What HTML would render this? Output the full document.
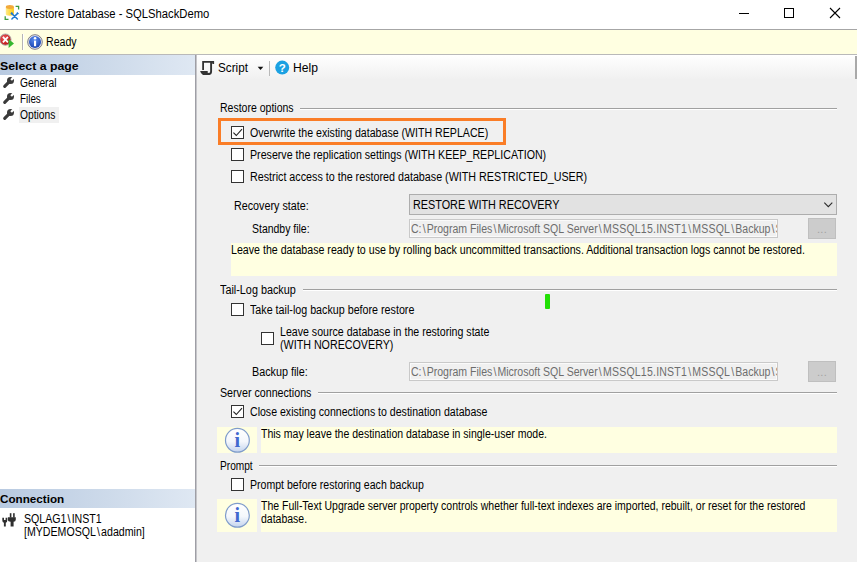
<!DOCTYPE html>
<html>
<head>
<meta charset="utf-8">
<title>Restore Database - SQLShackDemo</title>
<style>
html,body{margin:0;padding:0;}
body{width:857px;height:562px;overflow:hidden;position:relative;background:#fff;font-family:"Liberation Sans",sans-serif;font-size:12px;color:#000;}
.abs{position:absolute;}
svg{position:absolute;overflow:visible;}
.t{position:absolute;white-space:nowrap;line-height:13px;transform:scaleX(.884);transform-origin:0 50%;}
.s{font-size:12px;line-height:16px;transform:scaleX(.937);}
#titlebar{left:0;top:0;width:857px;height:29px;background:#fff;}
#status{left:0;top:29px;width:857px;height:24px;background:#ffffe1;border-top:1px solid #a6a6a6;border-bottom:1px solid #b9b9b9;}
#left{left:0;top:55px;width:195px;height:507px;background:#fff;}
#right{left:195px;top:55px;width:662px;height:507px;background:#f0f0f0;}
#rborder{left:195px;top:55px;width:2px;height:507px;background:linear-gradient(90deg,#9e9ea5 0,#9e9ea5 50%,#c6c6ca 50%,#c6c6ca 100%);}
#toolbar{left:196px;top:55px;width:661px;height:25px;background:linear-gradient(#ffffff,#f9f9f9 40%,#f0f0f0);}
.hdr{position:absolute;left:0;width:195px;background:linear-gradient(90deg,#b8cae1 0%,#cddaea 55%,#dfe8f3 100%);}
.hdr span{position:absolute;left:0px;top:4px;font-weight:bold;font-size:11.5px;line-height:15px;white-space:nowrap;transform-origin:0 50%;}
.cb{position:absolute;width:11px;height:11px;border:1px solid #333;background:#fff;}
.line{position:absolute;height:1px;background:#a0a0a0;box-shadow:0 1px 0 #fff;}
.note{position:absolute;background:#ffffe1;}
.tb{position:absolute;height:17px;border:1px solid #c9c9c9;background:#f0f0f0;color:#6d6d6d;overflow:hidden;white-space:nowrap;box-shadow:inset 0 0 0 1px #fafafa;}
.tb span{position:absolute;left:0.8px;top:2.5px;line-height:13px;transform:scaleX(.878);transform-origin:0 50%;}
.bs{margin:0 1.27px;font-style:normal;}
.uc{letter-spacing:.24px;font-style:normal;}
.btn{position:absolute;width:26px;height:19px;border:1px solid #bfbfbf;background:#cccccc;color:#a3a3a3;}
.btn span{position:absolute;left:8px;top:4px;font-size:11px;line-height:13px;letter-spacing:0.3px;}
</style>
</head>
<body>
<div id="titlebar" class="abs"></div>
<!-- title icon -->
<svg style="left:0;top:0" width="24" height="24" viewBox="0 0 24 24">
  <defs><linearGradient id="cy" x1="0" x2="1"><stop offset="0" stop-color="#ffe98a"/><stop offset=".45" stop-color="#ffdc4a"/><stop offset="1" stop-color="#fccb1a"/></linearGradient></defs>
  <path d="M5.8 7 V14 A4.05 1.7 0 0 0 13.9 14 V7 Z" fill="url(#cy)"/>
  <ellipse cx="9.85" cy="7" rx="4.05" ry="1.9" fill="#f2a93c"/>
  <path d="M15.6 6.4 H18.6 V9.5" fill="none" stroke="#3d9b3d" stroke-width="1.3"/>
  <path d="M5.2 16.3 V19.3 H8.5" fill="none" stroke="#3d9b3d" stroke-width="1.3"/>
  <path d="M11.6 13.4 L17.4 19 M17.6 13.4 L11.9 19" stroke="#1f78d1" stroke-width="1.5" stroke-linecap="round"/>
  <path d="M10.4 13.6 L11.9 12.1 L13 13.2 L11.5 14.7 Z" fill="#1f78d1"/>
  <path d="M16.6 12.6 Q17 14.2 18.8 14.3 L18.8 13.2 L17.7 13.2 L17.7 12.1 Z" fill="#1f78d1"/>
</svg>
<div id="title" class="t s" style="left:25.4px;top:6px;">Restore Database - SQLShackDemo</div>
<!-- window controls -->
<svg style="left:730px;top:0" width="127" height="29" viewBox="730 0 127 29">
  <path d="M739 13.5 H749" stroke="#000" stroke-width="1"/>
  <rect x="784.5" y="8.5" width="9" height="9" fill="none" stroke="#000" stroke-width="1"/>
  <path d="M830 8 L840 18 M840 8 L830 18" stroke="#000" stroke-width="1.1"/>
</svg>

<div id="status" class="abs"></div>
<svg style="left:0;top:30px" width="48" height="24" viewBox="0 30 48 24">
  <defs>
    <radialGradient id="rd" cx=".4" cy=".35" r=".7"><stop offset="0" stop-color="#f05a5a"/><stop offset="1" stop-color="#b80c0c"/></radialGradient>
    <radialGradient id="bl" cx=".45" cy=".3" r=".8"><stop offset="0" stop-color="#5b8ef0"/><stop offset="1" stop-color="#0f3aa8"/></radialGradient>
  </defs>
  <circle cx="5.4" cy="39.6" r="5.6" fill="url(#rd)" stroke="#a9a9a9" stroke-width="1"/>
  <path d="M2.9 36.9 L7.9 42.3 M7.9 36.9 L2.9 42.3" stroke="#fff" stroke-width="1.7"/>
  <path d="M8.6 39 L14 43.6 L8.6 48 Z" fill="#36b82f"/>
  <path d="M22.5 34 V50" stroke="#b5b5b5" stroke-width="1"/>
  <path d="M23.5 34 V50" stroke="#ffffff" stroke-width="1"/>
  <circle cx="35" cy="42" r="7.3" fill="#e8e8f0" stroke="#7d7d86" stroke-width="1"/>
  <circle cx="35" cy="42" r="6" fill="url(#bl)"/>
  <rect x="34" y="40.6" width="2.1" height="5.6" fill="#fff"/>
  <circle cx="35.05" cy="38.2" r="1.25" fill="#fff"/>
</svg>
<div id="ready" class="t" style="left:46px;top:36px;">Ready</div>

<div id="left" class="abs"></div>
<div id="right" class="abs"></div>
<div id="toolbar" class="abs"></div>
<div id="rborder" class="abs"></div>
<div class="abs" style="left:855.3px;top:56px;width:2px;height:23px;background:#a9a9a9;"></div>

<div class="hdr" style="top:55px;height:20px;"><span id="h1" style="transform:scaleX(1.07);">Select a page</span></div>
<div class="abs" style="left:19px;top:107px;width:40px;height:16px;background:#f0f0f0;"></div>
<svg style="left:3px;top:77px" width="11" height="11" viewBox="0 0 11 11"><path d="M1.7 9.4 L6.4 4.7" stroke="#3a3a3a" stroke-width="3.1" stroke-linecap="round"/><circle cx="7.5" cy="3.6" r="3.5" fill="#3a3a3a"/><path d="M8.1 3.0 L12 -0.9" stroke="#fff" stroke-width="2.3"/></svg>
<svg style="left:3px;top:93px" width="11" height="11" viewBox="0 0 11 11"><path d="M1.7 9.4 L6.4 4.7" stroke="#3a3a3a" stroke-width="3.1" stroke-linecap="round"/><circle cx="7.5" cy="3.6" r="3.5" fill="#3a3a3a"/><path d="M8.1 3.0 L12 -0.9" stroke="#fff" stroke-width="2.3"/></svg>
<svg style="left:3px;top:109px" width="11" height="11" viewBox="0 0 11 11"><path d="M1.7 9.4 L6.4 4.7" stroke="#3a3a3a" stroke-width="3.1" stroke-linecap="round"/><circle cx="7.5" cy="3.6" r="3.5" fill="#3a3a3a"/><path d="M8.1 3.0 L12 -0.9" stroke="#fff" stroke-width="2.3"/></svg>
<div id="p1" class="t" style="left:20.2px;top:77px;transform:scaleX(.855);">General</div>
<div id="p2" class="t" style="left:20.4px;top:93px;transform:scaleX(.82);">Files</div>
<div id="p3" class="t" style="left:20.2px;top:109px;transform:scaleX(.855);">Options</div>

<div class="hdr" style="top:489px;height:19px;"><span id="h2" style="transform:scaleX(1.015);top:3px;">Connection</span></div>
<svg style="left:2px;top:513px" width="14" height="14" viewBox="0 0 14 14">
  <path d="M0.3 4.8 H2 V7 H3.6 V4.8 H5.3 V7.3 Q5.3 9.6 3.8 9.8 V13.6 H1.9 V9.8 Q0.3 9.6 0.3 7.3 Z" fill="#2f2f2f"/>
  <rect x="7.8" y="0.2" width="1.6" height="4.4" fill="#2f2f2f"/>
  <rect x="11.1" y="0.2" width="1.6" height="4.4" fill="#2f2f2f"/>
  <path d="M5.9 4.2 H13.8 V6.4 Q13.8 8.6 11.6 8.7 V13.6 H8.6 V8.7 Q5.9 8.6 5.9 6.4 Z" fill="#2f2f2f"/>
</svg>
<div id="c1" class="t" style="left:24px;top:513px;">SQLAG1<i class="bs">\</i>INST1</div>
<div id="c2" class="t" style="left:24px;top:526px;">[MYDEMOSQL<i class="bs">\</i>adadmin]</div>

<!-- toolbar -->
<svg style="left:200px;top:60px" width="15" height="16" viewBox="0 0 15 16">
  <path d="M3.1 10 V1.9 H13.2 V4" fill="none" stroke="#333" stroke-width="1.8"/>
  <path d="M11.1 1.9 V11.4 Q11.1 14 8.4 14" fill="none" stroke="#333" stroke-width="1.9"/>
  <path d="M0.1 11 H7.7 V12.7 L10 13.2 L9.6 14.9 H3 Q0.7 13.8 0.1 11 Z" fill="#333"/>
</svg>
<div id="s1" class="t s" style="left:218px;top:60px;transform:scaleX(.975);">Script</div>
<svg style="left:257px;top:66px" width="8" height="5" viewBox="0 0 8 5"><path d="M0.7 0.8 H6.3 L3.5 4 Z" fill="#111"/></svg>
<div class="abs" style="left:269px;top:61px;width:1px;height:15px;background:#b9b9b9;"></div>
<svg style="left:275px;top:60px" width="15" height="15" viewBox="0 0 15 15"><circle cx="7.2" cy="7.6" r="7" fill="#1ba1e2"/><text x="7.2" y="11.6" text-anchor="middle" font-family="Liberation Sans, sans-serif" font-weight="bold" font-size="11.5" fill="#fff">?</text></svg>
<div id="s2" class="t s" style="left:293.3px;top:60px;transform:scaleX(1.01);">Help</div>

<div id="g1" class="t" style="left:220px;top:102px;transform:scaleX(0.876);">Restore options</div>
<div class="line" style="left:300px;top:108px;width:537px;"></div>

<div class="abs" style="left:218px;top:118px;width:281.7px;height:20.6px;border:3px solid #fa7d27;"></div>
<div class="cb" style="left:231px;top:126px;"></div>
<svg style="left:231px;top:126px" width="13" height="13" viewBox="0 0 13 13"><path d="M2.4 6.6 L5.3 9.5 L11 3.2" fill="none" stroke="#222" stroke-width="1.1"/></svg>
<div id="o1" class="t" style="left:249.5px;top:126.5px;">Overwrite the existing database (WITH REPLACE)</div>
<div class="cb" style="left:231px;top:148px;"></div>
<div id="o2" class="t" style="left:250px;top:149px;transform:scaleX(.887);">Preserve the replication settings (WITH KEEP_REPLICATION)</div>
<div class="cb" style="left:231px;top:170px;"></div>
<div id="o3" class="t" style="left:250px;top:171px;transform:scaleX(0.8946);">Restrict access to the restored database (WITH RESTRICTED_USER)</div>

<div id="l1" class="t" style="left:234px;top:200px;transform:scaleX(0.8957);">Recovery state:</div>
<div class="abs" style="left:409px;top:194px;width:426px;height:19px;border:1px solid #adadad;background:#e2e2e2;"></div>
<svg style="left:823px;top:201px" width="11" height="8" viewBox="0 0 11 8"><path d="M1.3 1.6 L5.3 5.6 L9.3 1.6" fill="none" stroke="#2b2b2b" stroke-width="1.1"/></svg>
<div id="cbt" class="t" style="left:413px;top:198.6px;transform:scaleX(.9025);">RESTORE WITH RECOVERY</div>
<div id="l2" class="t" style="left:252px;top:223px;transform:scaleX(0.872);">Standby file:</div>
<div class="tb" style="left:409px;top:219px;width:367px;"><span id="tb1">C:<i class="bs">\</i>Program Files<i class="bs">\</i>Microsoft SQL Server<i class="bs">\</i><i class="uc">MSSQL15.INST1</i><i class="bs">\</i><i class="uc">MSSQL</i><i class="bs">\</i>Backup<i class="bs">\</i>SQLShackDemo</span></div>
<div class="btn" style="left:808px;top:218px;"><span>...</span></div>
<div class="note" style="left:231px;top:243px;width:606px;height:32.5px;"></div>
<div id="n1" class="t" style="left:230.7px;top:244px;transform:scaleX(.886);">Leave the database ready to use by rolling back uncommitted transactions. Additional transaction logs cannot be restored.</div>

<div id="g2" class="t" style="left:220px;top:284px;transform:scaleX(0.902);">Tail-Log backup</div>
<div class="line" style="left:303px;top:289px;width:534px;"></div>
<div class="abs" style="left:545.4px;top:294.4px;width:4.8px;height:15px;background:#22e005;border-radius:1px;"></div>
<div class="cb" style="left:231px;top:303px;"></div>
<div id="o4" class="t" style="left:250px;top:304px;transform:scaleX(0.893);">Take tail-log backup before restore</div>
<div class="cb" style="left:261px;top:332px;"></div>
<div id="o5" class="t" style="left:280px;top:326px;">Leave source database in the restoring state</div>
<div id="o6" class="t" style="left:280px;top:339px;transform:scaleX(0.892);">(WITH NORECOVERY)</div>
<div id="l3" class="t" style="left:252px;top:366px;transform:scaleX(0.899);">Backup file:</div>
<div class="tb" style="left:409px;top:362px;width:367px;"><span id="tb2">C:<i class="bs">\</i>Program Files<i class="bs">\</i>Microsoft SQL Server<i class="bs">\</i><i class="uc">MSSQL15.INST1</i><i class="bs">\</i><i class="uc">MSSQL</i><i class="bs">\</i>Backup<i class="bs">\</i>SQLShackDemo</span></div>
<div class="btn" style="left:808px;top:361px;"><span>...</span></div>

<div id="g3" class="t" style="left:220px;top:387px;transform:scaleX(0.89);">Server connections</div>
<div class="line" style="left:318px;top:392px;width:519px;"></div>
<div class="cb" style="left:231px;top:405px;"></div>
<svg style="left:231px;top:405px" width="13" height="13" viewBox="0 0 13 13"><path d="M2.4 6.6 L5.3 9.5 L11 3.2" fill="none" stroke="#222" stroke-width="1.1"/></svg>
<div id="o7" class="t" style="left:250px;top:406px;transform:scaleX(0.881);">Close existing connections to destination database</div>
<div class="note" style="left:217px;top:427px;width:40px;height:26px;"></div>
<div class="note" style="left:261px;top:427px;width:576px;height:26px;"></div>
<svg style="left:224px;top:427px" width="27" height="27" viewBox="0 0 27 27">
  <defs><linearGradient id="ig" x1="0" y1="0" x2="0" y2="1"><stop offset="0" stop-color="#ffffff"/><stop offset=".55" stop-color="#f4f7fc"/><stop offset="1" stop-color="#c3d3ee"/></linearGradient></defs>
  <circle cx="13.4" cy="13.3" r="11.9" fill="url(#ig)" stroke="#7f9ccb" stroke-width="1.2"/>
  <text x="13.4" y="20.2" text-anchor="middle" font-family="Liberation Serif, serif" font-weight="bold" font-size="20" fill="#4168cf">i</text>
</svg>
<div id="n2" class="t" style="left:260.7px;top:428px;transform:scaleX(0.8766);">This may leave the destination database in single-user mode.</div>

<div id="g4" class="t" style="left:220px;top:460px;transform:scaleX(0.845);">Prompt</div>
<div class="line" style="left:259px;top:465px;width:578px;"></div>
<div class="cb" style="left:231px;top:478px;"></div>
<div id="o8" class="t" style="left:250px;top:479px;transform:scaleX(0.88);">Prompt before restoring each backup</div>
<div class="note" style="left:217px;top:499px;width:40px;height:32.6px;"></div>
<div class="note" style="left:261px;top:499px;width:576px;height:32.6px;"></div>
<svg style="left:224px;top:502px" width="27" height="27" viewBox="0 0 27 27">
  <circle cx="13.4" cy="13.3" r="11.9" fill="url(#ig)" stroke="#7f9ccb" stroke-width="1.2"/>
  <text x="13.4" y="20.2" text-anchor="middle" font-family="Liberation Serif, serif" font-weight="bold" font-size="20" fill="#4168cf">i</text>
</svg>
<div id="n3" class="t" style="left:260.7px;top:500px;transform:scaleX(0.8739);">The Full-Text Upgrade server property controls whether full-text indexes are imported, rebuilt, or reset for the restored</div>
<div id="n4" class="t" style="left:260.7px;top:513px;transform:scaleX(0.8739);">database.</div>
</body>
</html>
